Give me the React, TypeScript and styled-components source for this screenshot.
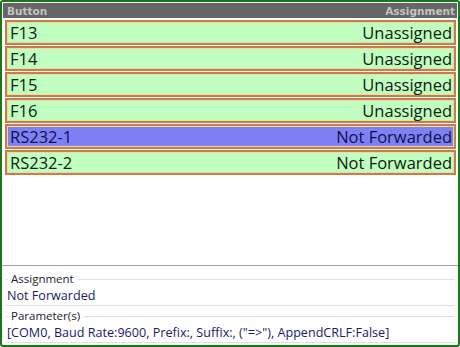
import React from "react";
import styled, { createGlobalStyle } from "styled-components";

const GlobalStyle = createGlobalStyle`
  html, body {
    margin: 0;
    padding: 0;
    background: #ffffff;
  }
  body {
    font-family: "Open Sans", "DejaVu Sans", sans-serif;
  }
`;

const Frame = styled.div`
  width: 460px;
  height: 347px;
  box-sizing: border-box;
  border: 2px solid #187818;
  border-radius: 3px;
  background: #ffffff;
  display: flex;
  flex-direction: column;
  overflow: hidden;
`;

const ListArea = styled.div`
  height: 264px;
  flex-shrink: 0;
  box-sizing: border-box;
  padding: 1px 1px 0 1px;
  border-bottom: 1px solid #a0a0a0;
  display: flex;
  flex-direction: column;
`;

const Header = styled.div`
  height: 15px;
  flex-shrink: 0;
  background: #666666;
  display: flex;
  justify-content: space-between;
  align-items: center;
  padding: 0 2px 0 4px;
  font-family: "DejaVu Sans", sans-serif;
  font-size: 10.5px;
  font-weight: bold;
  color: #c4c4c4;
  border-bottom: 1px solid #ffffff;
`;

const Rows = styled.div`
  display: flex;
  flex-direction: column;
  padding: 1px 1px 0 2px;
  gap: 1px;
`;

const Row = styled.div<{ $selected?: boolean }>`
  height: 21px;
  border: 2px solid #cf7a4a;
  box-shadow: inset 0 0 0 1px #e0e0a0;
  background: ${(p) => (p.$selected ? "#8080f4" : "#c0ffc0")};
  display: flex;
  justify-content: space-between;
  align-items: center;
  padding: 0 2px 0 3px;
  font-size: 16.5px;
  color: ${(p) => (p.$selected ? "#10104a" : "#102010")};
`;

const Details = styled.div`
  flex: 1;
  display: flex;
  flex-direction: column;
  padding: 5px 3px 0 3px;
  gap: 2px;
`;

const Group = styled.fieldset`
  margin: 0;
  padding: 0 0 1px 2px;
  border: none;
  border-top: 1px solid #e0e0e0;
  border-bottom: 1px solid #e0e0e0;
  border-radius: 2px;
`;

const Legend = styled.legend`
  padding: 0 3px;
  margin-left: 1px;
  font-size: 11.5px;
  line-height: 16px;
  color: #202030;
`;

const Value = styled.div`
  font-size: 12.6px;
  line-height: 17px;
  color: #1a1a6a;
  white-space: nowrap;
`;

const rows = [
  { button: "F13", assignment: "Unassigned" },
  { button: "F14", assignment: "Unassigned" },
  { button: "F15", assignment: "Unassigned" },
  { button: "F16", assignment: "Unassigned" },
  { button: "RS232-1", assignment: "Not Forwarded", selected: true },
  { button: "RS232-2", assignment: "Not Forwarded" },
];

const App = () => {
  return (
    <>
      <GlobalStyle />
      <Frame>
        <ListArea>
          <Header>
            <span>Button</span>
            <span>Assignment</span>
          </Header>
          <Rows>
            {rows.map((r) => (
              <Row key={r.button} $selected={r.selected}>
                <span>{r.button}</span>
                <span>{r.assignment}</span>
              </Row>
            ))}
          </Rows>
        </ListArea>
        <Details>
          <Group>
            <Legend>Assignment</Legend>
            <Value>Not Forwarded</Value>
          </Group>
          <Group>
            <Legend>Parameter(s)</Legend>
            <Value>[COM0, Baud Rate:9600, Prefix:, Suffix:, ("=&gt;"), AppendCRLF:False]</Value>
          </Group>
        </Details>
      </Frame>
    </>
  );
};

export default App;
